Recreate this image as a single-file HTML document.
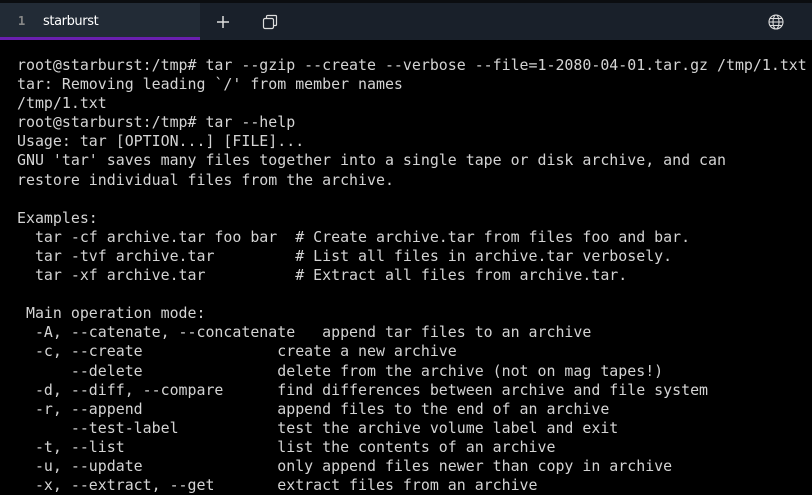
<!DOCTYPE html>
<html><head><style>
html,body{margin:0;padding:0;background:#000;width:812px;height:485px;overflow:hidden}
.top{position:absolute;left:0;top:0;width:812px;height:3px;background:#0b0d10}
.bar{position:absolute;left:0;top:3px;width:812px;height:37px;background:#19202a}
.tab{position:absolute;left:0;top:3px;width:200px;height:34px;background:#222b36;border-bottom:3px solid #6a1fb0}
.tab .n{position:absolute;left:18px;top:11px;font:bold 12px "DejaVu Sans Mono",monospace;color:#888}
.tab .t{position:absolute;left:43px;top:11px;font:13px "DejaVu Sans","Liberation Sans",sans-serif;color:#fff;letter-spacing:-0.4px}
.ic{position:absolute}
pre{position:absolute;left:17px;top:56px;margin:0;font-family:"DejaVu Sans Mono",monospace;font-size:14.92px;line-height:19.1px;color:#d4d4d4}
</style></head><body>
<div class="top"></div><div class="bar"></div>
<div class="tab"><span class="n">1</span><span class="t">starburst</span></div>
<svg class="ic" style="left:216px;top:15px" width="14" height="14"><path d="M7 1v12M1 7h12" stroke="#ddd" stroke-width="1.5"/></svg>
<svg class="ic" style="left:262px;top:14px" width="16" height="16" fill="none" stroke="#ddd" stroke-width="1.2"><rect x="1.5" y="4.5" width="10" height="10" rx="1.5"/><path d="M4.5 4.5V2.5a1 1 0 0 1 1-1h8a1 1 0 0 1 1 1v8a1 1 0 0 1-1 1h-2"/></svg>
<svg class="ic" style="left:768px;top:14px" width="16" height="16" fill="none" stroke="#ddd" stroke-width="1.1"><circle cx="8" cy="8" r="7"/><ellipse cx="8" cy="8" rx="3" ry="7"/><path d="M1 8h14M2 4.5h12M2 11.5h12"/></svg>
<pre>root@starburst:/tmp# tar --gzip --create --verbose --file=1-2080-04-01.tar.gz /tmp/1.txt
tar: Removing leading `/' from member names
/tmp/1.txt
root@starburst:/tmp# tar --help
Usage: tar [OPTION...] [FILE]...
GNU 'tar' saves many files together into a single tape or disk archive, and can
restore individual files from the archive.

Examples:
  tar -cf archive.tar foo bar  # Create archive.tar from files foo and bar.
  tar -tvf archive.tar         # List all files in archive.tar verbosely.
  tar -xf archive.tar          # Extract all files from archive.tar.

 Main operation mode:
  -A, --catenate, --concatenate   append tar files to an archive
  -c, --create               create a new archive
      --delete               delete from the archive (not on mag tapes!)
  -d, --diff, --compare      find differences between archive and file system
  -r, --append               append files to the end of an archive
      --test-label           test the archive volume label and exit
  -t, --list                 list the contents of an archive
  -u, --update               only append files newer than copy in archive
  -x, --extract, --get       extract files from an archive</pre>
</body></html>
